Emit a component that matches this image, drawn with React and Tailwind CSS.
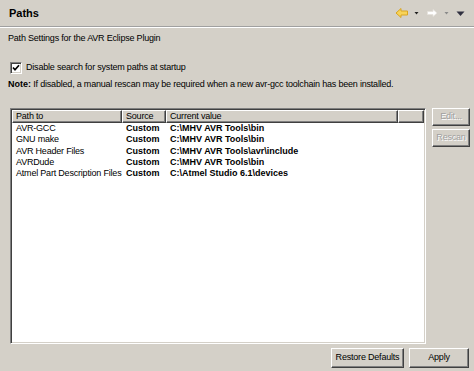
import React from "react";

const font = { fontFamily: '"Liberation Sans", Arial, sans-serif' };

function ClassicButton({ children, className = "", disabled = false }) {
  return (
    <div
      className={`flex items-center justify-center whitespace-nowrap bg-[#d4d0c8] border border-t-white border-l-white border-r-[#404040] border-b-[#404040] shadow-[inset_-1px_-1px_0_#808080] ${className}`}
    >
      <span
        className={
          disabled
            ? "text-[#a0a0a0] [text-shadow:1px_1px_0_#ffffff]"
            : "text-black"
        }
      >
        {children}
      </span>
    </div>
  );
}

function HeaderCell({ children, className = "" }) {
  return (
    <div
      className={`h-full flex items-center pl-[3px] border-t border-l border-t-white border-l-white border-r border-b border-r-[#404040] border-b-[#404040] shadow-[inset_-1px_-1px_0_#808080] ${className}`}
    >
      {children}
    </div>
  );
}

const rows = [
  ["AVR-GCC", "Custom", "C:\\MHV AVR Tools\\bin"],
  ["GNU make", "Custom", "C:\\MHV AVR Tools\\bin"],
  ["AVR Header Files", "Custom", "C:\\MHV AVR Tools\\avr\\include"],
  ["AVRDude", "Custom", "C:\\MHV AVR Tools\\bin"],
  ["Atmel Part Description Files", "Custom", "C:\\Atmel Studio 6.1\\devices"],
];

export default function App() {
  return (
    <div
      className="w-[474px] h-[371px] bg-[#d4d0c8] text-[9px] tracking-[-0.2px] text-black flex flex-col overflow-hidden"
      style={font}
    >
      {/* Header */}
      <div className="h-[28px] shrink-0 flex items-center justify-between pl-[9px] pr-[9px] border-b border-b-white shadow-[inset_0_-1px_0_#a0a0a0]">
        <span className="text-[11px] font-bold tracking-normal">Paths</span>
        <div className="flex items-center -mt-[1px]">
          <svg width="14" height="12" viewBox="0 0 14 12" className="mr-[4px]">
            <path
              d="M1 6 L6 1.5 L6 4 L12.5 4 L12.5 8 L6 8 L6 10.5 Z"
              fill="#f7d35a"
              stroke="#d9a520"
              strokeWidth="1"
              strokeLinejoin="round"
            />
          </svg>
          <svg width="7" height="6" viewBox="0 0 7 6" className="mr-[6px]">
            <path d="M1.5 2 L5.5 2 L3.5 4.5 Z" fill="#202020" />
          </svg>
          <svg width="12" height="10" viewBox="0 0 12 10" className="mr-[5px]">
            <path
              d="M11 5 L7 1.5 L7 3.5 L1.5 3.5 L1.5 6.5 L7 6.5 L7 8.5 Z"
              fill="#ffffff"
              stroke="#e4e1da"
              strokeWidth="0.8"
            />
          </svg>
          <svg width="7" height="6" viewBox="0 0 7 6" className="mr-[6px]">
            <path d="M1.5 2 L5.5 2 L3.5 4.5 Z" fill="#8a8a8a" />
          </svg>
          <svg width="9" height="7" viewBox="0 0 9 7">
            <path d="M0.5 1.5 L8.5 1.5 L4.5 6 Z" fill="#303040" />
          </svg>
        </div>
      </div>

      {/* Body */}
      <div className="flex flex-col pl-[8px] flex-1 min-h-0">
        <div className="mt-[4px] h-[13px] leading-[13px] whitespace-nowrap">
          Path Settings for the AVR Eclipse Plugin
        </div>

        <div className="mt-[16px] h-[13px] flex items-center pl-[2px]">
          <div className="w-[12px] h-[12px] bg-white border border-t-[#808080] border-l-[#808080] border-r-white border-b-white shadow-[inset_1px_1px_0_#404040,inset_-1px_-1px_0_#d4d0c8] flex items-center justify-center">
            <svg width="8" height="8" viewBox="0 0 8 8">
              <path
                d="M1 3.5 L3 5.7 L7 1.3"
                fill="none"
                stroke="#000"
                strokeWidth="1.7"
              />
            </svg>
          </div>
          <span className="ml-[4px] leading-[13px] whitespace-nowrap">
            Disable search for system paths at startup
          </span>
        </div>

        <div className="mt-[4px] h-[13px] leading-[13px] whitespace-nowrap">
          <span className="font-bold tracking-normal">Note:</span> If disabled,
          a manual rescan may be required when a new avr-gcc toolchain has been
          installed.
        </div>

        {/* Table + side buttons */}
        <div className="mt-[17px] flex flex-1 min-h-0 pl-[2px]">
          <div className="w-[416px] h-[236px] bg-white border border-t-[#808080] border-l-[#808080] border-r-white border-b-white shadow-[inset_1px_1px_0_#404040,inset_-1px_-1px_0_#d4d0c8] p-[1px] flex flex-col">
            <div className="h-[13px] shrink-0 flex bg-[#d4d0c8] leading-[11px]">
              <HeaderCell className="w-[110px]">Path to</HeaderCell>
              <HeaderCell className="w-[44px]">Source</HeaderCell>
              <HeaderCell className="w-[232px]">Current value</HeaderCell>
              <HeaderCell className="flex-1"></HeaderCell>
            </div>
            <div className="flex flex-col">
              {rows.map((r, i) => (
                <div
                  key={i}
                  className="flex h-[11.33px] items-center leading-[11px] whitespace-nowrap"
                >
                  <div className="w-[110px] pl-[4px]">{r[0]}</div>
                  <div className="w-[44px] pl-[4px] font-bold tracking-normal">
                    {r[1]}
                  </div>
                  <div className="w-[232px] pl-[4px] font-bold tracking-normal">
                    {r[2]}
                  </div>
                </div>
              ))}
            </div>
          </div>

          <div className="ml-[6px] flex flex-col gap-[3px]">
            <ClassicButton disabled className="w-[38px] h-[18px]">
              Edit...
            </ClassicButton>
            <ClassicButton disabled className="w-[38px] h-[18px]">
              Rescan
            </ClassicButton>
          </div>
        </div>

        {/* Bottom buttons */}
        <div className="h-[27px] shrink-0 flex justify-end items-start pt-[4px] pr-[5px] gap-[5px]">
          <ClassicButton className="w-[73px] h-[20px]">Restore Defaults</ClassicButton>
          <ClassicButton className="w-[60px] h-[20px]">Apply</ClassicButton>
        </div>
      </div>
    </div>
  );
}
